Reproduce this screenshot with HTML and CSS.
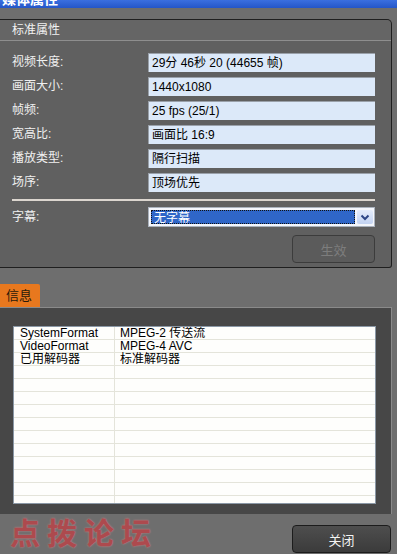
FILE: index.html
```html
<!DOCTYPE html>
<html lang="zh-CN">

<head>
  <meta charset="UTF-8">
  <meta name="viewport" content="width=device-width, initial-scale=1.0">
  <title>媒体属性</title>
  <link rel="stylesheet" href="styles.css">
</head>

<body>
  <div class="titlebar"><span>媒体属性</span></div>

  <!-- 标准属性 -->
  <div class="panel">
    <div class="panel-head">标准属性</div>
    <div class="panel-body">
      <div class="props">
        <div class="prop-label">视频长度:</div>
        <div class="prop-field">29分 46秒 20 (44655 帧)</div>
        <div class="prop-label">画面大小:</div>
        <div class="prop-field">1440x1080</div>
        <div class="prop-label">帧频:</div>
        <div class="prop-field">25 fps (25/1)</div>
        <div class="prop-label">宽高比:</div>
        <div class="prop-field">画面比 16:9</div>
        <div class="prop-label">播放类型:</div>
        <div class="prop-field">隔行扫描</div>
        <div class="prop-label">场序:</div>
        <div class="prop-field">顶场优先</div>
      </div>
      <div class="sep"></div>
      <div class="sub-row">
        <div class="prop-label">字幕:</div>
        <div class="select">
          <div class="select-value">无字幕</div>
          <div class="select-btn">
            <svg width="10" height="7" viewBox="0 0 10 7">
              <path d="M1.5 1.5 L5 5 L8.5 1.5" fill="none" stroke="#2d4686" stroke-width="2" />
            </svg>
          </div>
        </div>
      </div>
      <div class="btn-row">
        <button type="button" class="btn btn--disabled">生效</button>
      </div>
    </div>
  </div>

  <!-- 信息 -->
  <div class="tab-row">
    <div class="tab">信息</div>
  </div>
  <div class="info-panel">
    <div class="info-list" id="info-list"></div>
  </div>

  <div class="footer">
    <div class="watermark">点拨论坛</div>
    <button type="button" class="btn btn--close">关闭</button>
  </div>

  <script>
    // 信息列表
    var infoRows = [
      ["SystemFormat", "MPEG-2 传送流"],
      ["VideoFormat", "MPEG-4 AVC"],
      ["已用解码器", "标准解码器"]
    ]

    var list = document.getElementById("info-list")
    for (var i = 0; i < 14; i++) {
      var row = infoRows[i] || ["", ""]
      var el = document.createElement("div")
      el.className = "info-row"
      el.innerHTML = `
        <div class="info-key">${row[0]}</div>
        <div class="info-val">${row[1]}</div>
      `
      list.appendChild(el)
    }
  </script>
</body>

</html>
```

FILE: styles.css
```css
body {
  margin: 0;
  width: 397px;
  background-color: #6e6e6e;
  font-family: "Liberation Sans", "Noto Sans CJK SC", sans-serif;
  font-size: 12px;
  color: #000;
}

.titlebar {
  height: 8px;
  overflow: hidden;
  background: linear-gradient(#3a6fe0, #2456c8);
}

.titlebar span {
  display: block;
  margin-top: -9px;
  padding-left: 2px;
  line-height: 16px;
  font-size: 14px;
  font-weight: bold;
  color: #fff;
}

.panel {
  margin-top: 11px;
  margin-right: 5px;
  border: 1px solid #1f1f1f;
  border-left: none;
  border-top-right-radius: 5px;
  border-bottom-right-radius: 3px;
  background-color: #606060;
}

.panel-head {
  height: 20px;
  line-height: 20px;
  padding-left: 12px;
  font-size: 12px;
  color: #f2f2f2;
  background-color: #656565;
  border-bottom: 1px solid #8e8e8e;
  border-top-right-radius: 5px;
}

.panel-body {
  padding: 12px 16px 4px 12px;
}

.props {
  display: grid;
  grid-template-columns: 136px 227px;
  row-gap: 5px;
}

.prop-label {
  height: 19px;
  line-height: 19px;
  color: #f0f0f0;
}

.prop-field {
  height: 19px;
  line-height: 18px;
  box-sizing: border-box;
  padding-left: 3px;
  background-color: #dce9f9;
  border-top: 1px solid #9aa1aa;
  border-left: 1px solid #9aa1aa;
  white-space: nowrap;
}

.sep {
  height: 2px;
  margin-top: 7px;
  background-color: #dcd6cf;
}

.sub-row {
  display: flex;
  margin-top: 6px;
}

.sub-row .prop-label {
  width: 136px;
  height: 20px;
  line-height: 20px;
}

.select {
  display: flex;
  width: 227px;
  height: 20px;
  box-sizing: border-box;
  padding: 2px 1px 2px 2px;
  background-color: #f4f6fb;
  border: 1px solid #aab2bd;
}

.select-value {
  flex: 1;
  box-sizing: border-box;
  line-height: 14px;
  padding-left: 2px;
  color: #fff;
  background-color: #2f66c8;
  border: 1px dotted #111;
}

.select-btn {
  width: 16px;
  margin-left: 2px;
  display: flex;
  align-items: center;
  justify-content: center;
  background: linear-gradient(#e4ecfb, #c3d3f2);
  border-radius: 2px;
}

.btn-row {
  display: flex;
  justify-content: flex-end;
  margin-top: 8px;
}

.btn {
  height: 28px;
  box-sizing: border-box;
  border: 1px solid #2a2a2a;
  border-radius: 4px;
  font-family: "Noto Sans CJK SC", sans-serif;
  font-size: 13px;
  padding: 0;
}

.btn--disabled {
  width: 83px;
  background-color: #5b5b5b;
  color: #7d7d7d;
  border-color: #3c3c3c;
}

.btn--close {
  width: 99px;
  margin-top: 11px;
  background: linear-gradient(#4e4e4e, #3b3b3b);
  color: #f4f4f4;
  border-color: #1c1c1c;
}

.tab-row {
  margin-top: 16px;
  display: flex;
}

.tab {
  width: 40px;
  height: 23px;
  line-height: 23px;
  padding-left: 6px;
  box-sizing: border-box;
  background-color: #e8781e;
  font-size: 13px;
  color: #2a1a0a;
  border-top-right-radius: 2px;
}

.info-panel {
  margin-right: 5px;
  height: 207px;
  box-sizing: border-box;
  padding: 18px 15px 0 13px;
  background-color: #474747;
  border-top: 1px solid #8a8a8a;
  border-right: 1px solid #8a8a8a;
}

.info-list {
  height: 176px;
  overflow: hidden;
  background-color: #fefefc;
  border: 1px solid #8b98a6;
}

.info-row {
  display: flex;
  height: 13px;
  line-height: 13px;
  border-bottom: 1px solid #e4e4da;
  box-sizing: border-box;
  font-size: 12px;
}

.info-key {
  width: 94px;
  padding-left: 6px;
  border-right: 1px solid #e4e4da;
  white-space: nowrap;
}

.info-val {
  padding-left: 5px;
  white-space: nowrap;
}

.footer {
  display: flex;
  justify-content: space-between;
  height: 40px;
  padding: 0 6px 0 10px;
}

.watermark {
  margin-top: 2px;
  height: 30px;
  line-height: 30px;
  font-family: "Noto Sans CJK SC", sans-serif;
  font-size: 30px;
  font-weight: bold;
  letter-spacing: 7px;
  color: #ad4a4e;
  text-shadow: 0 0 2px #c98a8c;
}
```
